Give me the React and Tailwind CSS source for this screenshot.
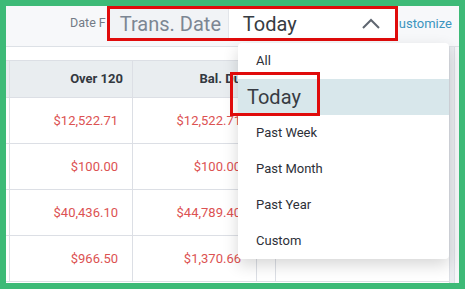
import { Fragment } from 'react'

const rows = [
  ['$12,522.71', '$12,522.71'],
  ['$100.00', '$100.00'],
  ['$40,436.10', '$44,789.40'],
  ['$966.50', '$1,370.66'],
]

const options = ['All', 'Today', 'Past Week', 'Past Month', 'Past Year', 'Custom']

export default function App() {
  return (
    <div className="w-[465px] h-[289px] bg-[#3dba77] p-[6px]" style={{ fontFamily: 'Roboto, "Noto Sans", sans-serif' }}>
      <div className="relative w-[453px] h-[277px] bg-white overflow-hidden flex flex-col">

        {/* Top bar */}
        <div className="h-[41px] flex-shrink-0 bg-[#f7f8fa] border-b border-[#dde1e6] flex items-start justify-end pr-[7px]">
          <div className="h-[35px] flex items-center text-[12.5px] text-[#737b86] pr-[1px]">Date F</div>
          <div className="w-[291px] h-[35px] border-[3px] border-[#e00b0b] flex">
            <div className="w-[119px] bg-[#f1f3f6] border-r border-[#e2e5ea] flex items-center pl-[10px] text-[20px] text-[#7c8693]">
              Trans. Date
            </div>
            <div className="flex-1 bg-white flex items-center justify-between pl-[14px] pr-[14px] text-[20px] text-[#373c43]">
              <span>Today</span>
              <svg width="20" height="12" viewBox="0 0 20 12" fill="none">
                <polyline points="2,10 10,2 18,10" stroke="#5f6670" strokeWidth="2" />
              </svg>
            </div>
          </div>
          <div className="h-[35px] flex items-center text-[13px] text-[#3d95bf] pl-[1px]">ustomize</div>
        </div>

        {/* Body */}
        <div className="flex-1 flex">
          <div className="flex-1 flex flex-col">
            <div className="h-[13px] flex-shrink-0 bg-white" />
            <div className="h-[38px] flex-shrink-0 flex bg-[#e9edf0] border-y border-[#dcdfe5] text-[13px] font-bold text-[#333840]">
              <div className="w-[3px]" />
              <div className="w-[123px] border-l border-[#dcdfe5] flex items-center justify-end pr-[9px]">Over 120</div>
              <div className="w-[124px] border-l border-[#dcdfe5] flex items-center justify-end pr-[8px]">Bal. Due</div>
              <div className="w-[19px] border-l border-[#dcdfe5]" />
              <div className="flex-1 border-l border-[#dcdfe5]" />
            </div>
            {rows.map((r, i) => (
              <div key={i} className="h-[46px] flex-shrink-0 flex border-b border-[#dcdfe5] text-[13px] text-[#dc5252]">
                <div className="w-[3px]" />
                <div className="w-[123px] border-l border-[#dcdfe5] flex items-center justify-end pr-[14px]">{r[0]}</div>
                <div className="w-[124px] border-l border-[#dcdfe5] flex items-center justify-end pr-[15px]">{r[1]}</div>
                <div className="w-[19px] border-l border-[#dcdfe5]" />
                <div className="flex-1 border-l border-[#dcdfe5]" />
              </div>
            ))}
          </div>
          <div className="w-[5px] bg-[#e9ebef] border-l border-[#dcdfe5]" />
          <div className="w-[5px] bg-[#f5f6f8] border-l border-[#dcdfe5]" />
        </div>

        {/* Dropdown menu */}
        <div className="absolute left-[232px] top-[37px] w-[211px] bg-white rounded-[4px] shadow-[0_6px_16px_rgba(0,0,0,0.16)]">
          {options.map((o) => (
            <Fragment key={o}>
              {o === 'Today' ? (
                <div className="h-[36px] bg-[#d8e7eb] flex items-center pl-[9px] text-[20px] text-[#373c43]">{o}</div>
              ) : (
                <div className="h-[36px] flex items-center pl-[18px] text-[13px] text-[#2d3038]">{o}</div>
              )}
            </Fragment>
          ))}
        </div>

        {/* Highlight box around Today */}
        <div className="absolute left-[224px] top-[66px] w-[90px] h-[44px] border-[3px] border-[#e00b0b]" />
      </div>
    </div>
  )
}
